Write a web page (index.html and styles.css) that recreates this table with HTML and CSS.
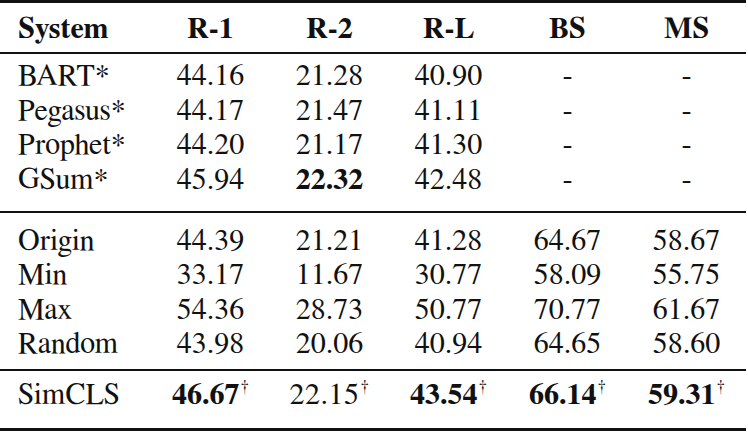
FILE: index.html
```html
<!DOCTYPE html>
<html lang="en">
<head>
    <meta charset="UTF-8">
    <meta name="viewport" content="width=device-width, initial-scale=1.0">
    <title>SimCLS Results</title>
    <link rel="stylesheet" href="styles.css">
</head>
<body>
    <table class="results">
        <thead>
            <tr>
                <th class="sys">System</th>
                <th>R-1</th>
                <th>R-2</th>
                <th>R-L</th>
                <th>BS</th>
                <th>MS</th>
            </tr>
        </thead>
        <tbody class="baselines">
            <tr>
                <td class="sys">BART*</td>
                <td>44.16</td>
                <td>21.28</td>
                <td>40.90</td>
                <td>-</td>
                <td>-</td>
            </tr>
            <tr>
                <td class="sys">Pegasus*</td>
                <td>44.17</td>
                <td>21.47</td>
                <td>41.11</td>
                <td>-</td>
                <td>-</td>
            </tr>
            <tr>
                <td class="sys">Prophet*</td>
                <td>44.20</td>
                <td>21.17</td>
                <td>41.30</td>
                <td>-</td>
                <td>-</td>
            </tr>
            <tr>
                <td class="sys">GSum*</td>
                <td>45.94</td>
                <td class="best">22.32</td>
                <td>42.48</td>
                <td>-</td>
                <td>-</td>
            </tr>
        </tbody>
        <tbody class="oracle">
            <tr>
                <td class="sys">Origin</td>
                <td>44.39</td>
                <td>21.21</td>
                <td>41.28</td>
                <td>64.67</td>
                <td>58.67</td>
            </tr>
            <tr>
                <td class="sys">Min</td>
                <td>33.17</td>
                <td>11.67</td>
                <td>30.77</td>
                <td>58.09</td>
                <td>55.75</td>
            </tr>
            <tr>
                <td class="sys">Max</td>
                <td>54.36</td>
                <td>28.73</td>
                <td>50.77</td>
                <td>70.77</td>
                <td>61.67</td>
            </tr>
            <tr>
                <td class="sys">Random</td>
                <td>43.98</td>
                <td>20.06</td>
                <td>40.94</td>
                <td>64.65</td>
                <td>58.60</td>
            </tr>
        </tbody>
        <tbody class="ours">
            <tr>
                <td class="sys">SimCLS</td>
                <td class="best">46.67<sup>&dagger;</sup></td>
                <td class="math">22.15<sup>&dagger;</sup></td>
                <td class="best">43.54<sup>&dagger;</sup></td>
                <td class="best">66.14<sup>&dagger;</sup></td>
                <td class="best">59.31<sup>&dagger;</sup></td>
            </tr>
        </tbody>
    </table>
</body>
</html>
```

FILE: styles.css
```css
* {
    margin: 0;
    padding: 0;
    box-sizing: border-box;
}

body {
    font-family: 'FreeSerif', 'Liberation Serif', 'Times New Roman', serif;
    background-color: white;
    color: #111;
}

.results {
    width: 746px;
    border-collapse: collapse;
    table-layout: fixed;
    border-top: 3px solid #111;
    border-bottom: 3px solid #111;
    font-size: 30px;
    line-height: 34.4px;
}

.results th,
.results td {
    width: 119px;
    padding: 0;
    text-align: center;
    white-space: nowrap;
}

.results .sys {
    width: 151px;
    padding-left: 18px;
    text-align: left;
}

.results th {
    font-weight: bold;
    padding-top: 9px;
    padding-bottom: 6px;
}

thead {
    border-bottom: 2px solid #111;
}

tbody + tbody {
    border-top: 2px solid #111;
}

/* spacing around the rules */
.baselines tr:first-child td {
    padding-top: 5px;
}

.baselines tr:last-child td {
    padding-bottom: 14px;
}

.oracle tr:first-child td {
    padding-top: 11px;
}

.oracle tr:last-child td {
    padding-bottom: 7px;
}

.ours td {
    padding-top: 7px;
    padding-bottom: 16px;
}

.best {
    font-weight: bold;
}

.math {
    letter-spacing: 0.5px;
}

sup {
    font-size: 17px;
    font-weight: normal;
    line-height: 0;
    vertical-align: 12px;
    margin-left: 1px;
}
```
